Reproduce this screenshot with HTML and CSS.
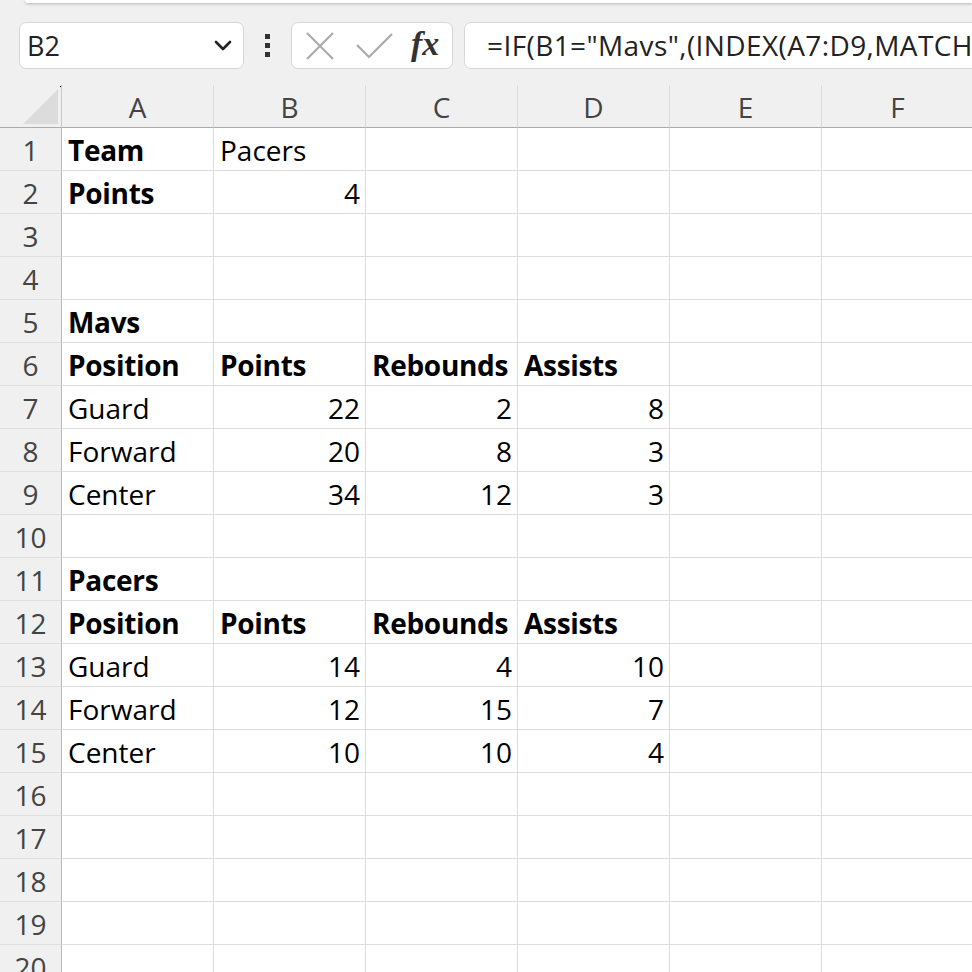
FILE: index.html
```html
<!DOCTYPE html>
<html>
<head>
<meta charset="utf-8">
<link rel="stylesheet" href="styles.css">
</head>
<body>
<div class="topstrip"></div>
<div class="fbar">
  <div class="namebox">
    <span class="nb-text">B2</span>
    <svg class="chev" width="20" height="12" viewBox="0 0 20 12"><path d="M3 2 L10 9 L17 2" fill="none" stroke="#222" stroke-width="2.6" stroke-linecap="round" stroke-linejoin="round"/></svg>
  </div>
  <div class="dots"><i></i><i></i><i></i></div>
  <div class="fxbox">
    <svg class="ic-x" width="30" height="30" viewBox="0 0 30 30"><path d="M2 2 L28 28 M28 2 L2 28" stroke="#ababab" stroke-width="2.2" fill="none"/></svg>
    <svg class="ic-check" width="38" height="28" viewBox="0 0 38 28"><path d="M1 13 L13 25 L36 2" stroke="#ababab" stroke-width="2.2" fill="none"/></svg>
    <span class="fx">fx</span>
  </div>
  <div class="formula">=IF(B1="Mavs",(INDEX(A7:D9,MATCH(B2,B6:D6,0),1)),(INDEX(A13:D15,MATCH(B2,B12:D12,0),1)))</div>
</div>
<div class="sheet">
  <div class="corner"><svg width="62" height="43" viewBox="0 0 62 43"><polygon points="23,39 58,4 58,39" fill="#dcdcdc"/><rect x="60" y="1" width="1" height="1" fill="#000"/></svg></div>
  <div class="ch">A</div><div class="ch">B</div><div class="ch">C</div><div class="ch">D</div><div class="ch">E</div><div class="ch">F</div>

  <div class="rh">1</div><div class="c b">Team</div><div class="c">Pacers</div><div class="c"></div><div class="c"></div><div class="c"></div><div class="c"></div>
  <div class="rh">2</div><div class="c b">Points</div><div class="c r">4</div><div class="c"></div><div class="c"></div><div class="c"></div><div class="c"></div>
  <div class="rh">3</div><div class="c"></div><div class="c"></div><div class="c"></div><div class="c"></div><div class="c"></div><div class="c"></div>
  <div class="rh">4</div><div class="c"></div><div class="c"></div><div class="c"></div><div class="c"></div><div class="c"></div><div class="c"></div>
  <div class="rh">5</div><div class="c b">Mavs</div><div class="c"></div><div class="c"></div><div class="c"></div><div class="c"></div><div class="c"></div>
  <div class="rh">6</div><div class="c b">Position</div><div class="c b">Points</div><div class="c b">Rebounds</div><div class="c b">Assists</div><div class="c"></div><div class="c"></div>
  <div class="rh">7</div><div class="c">Guard</div><div class="c r">22</div><div class="c r">2</div><div class="c r">8</div><div class="c"></div><div class="c"></div>
  <div class="rh">8</div><div class="c">Forward</div><div class="c r">20</div><div class="c r">8</div><div class="c r">3</div><div class="c"></div><div class="c"></div>
  <div class="rh">9</div><div class="c">Center</div><div class="c r">34</div><div class="c r">12</div><div class="c r">3</div><div class="c"></div><div class="c"></div>
  <div class="rh">10</div><div class="c"></div><div class="c"></div><div class="c"></div><div class="c"></div><div class="c"></div><div class="c"></div>
  <div class="rh">11</div><div class="c b">Pacers</div><div class="c"></div><div class="c"></div><div class="c"></div><div class="c"></div><div class="c"></div>
  <div class="rh">12</div><div class="c b">Position</div><div class="c b">Points</div><div class="c b">Rebounds</div><div class="c b">Assists</div><div class="c"></div><div class="c"></div>
  <div class="rh">13</div><div class="c">Guard</div><div class="c r">14</div><div class="c r">4</div><div class="c r">10</div><div class="c"></div><div class="c"></div>
  <div class="rh">14</div><div class="c">Forward</div><div class="c r">12</div><div class="c r">15</div><div class="c r">7</div><div class="c"></div><div class="c"></div>
  <div class="rh">15</div><div class="c">Center</div><div class="c r">10</div><div class="c r">10</div><div class="c r">4</div><div class="c"></div><div class="c"></div>
  <div class="rh">16</div><div class="c"></div><div class="c"></div><div class="c"></div><div class="c"></div><div class="c"></div><div class="c"></div>
  <div class="rh">17</div><div class="c"></div><div class="c"></div><div class="c"></div><div class="c"></div><div class="c"></div><div class="c"></div>
  <div class="rh">18</div><div class="c"></div><div class="c"></div><div class="c"></div><div class="c"></div><div class="c"></div><div class="c"></div>
  <div class="rh">19</div><div class="c"></div><div class="c"></div><div class="c"></div><div class="c"></div><div class="c"></div><div class="c"></div>
  <div class="rh">20</div><div class="c"></div><div class="c"></div><div class="c"></div><div class="c"></div><div class="c"></div><div class="c"></div>
</div>
</body>
</html>
```

FILE: styles.css
```css
html, body {
  margin: 0;
  padding: 0;
  background: #f0f0f0;
  width: 972px;
  height: 972px;
  overflow: hidden;
}

.topstrip {
  margin-left: 25px;
  height: 3px;
  background: #fff;
  border-bottom-left-radius: 8px;
  box-shadow: 0 1px 3px rgba(0,0,0,0.25);
}

.fbar {
  display: flex;
  align-items: stretch;
  height: 47px;
  margin-top: 19px;
  padding-left: 19px;
  font-family: "Open Sans", "Noto Sans", sans-serif;
}

.namebox {
  box-sizing: border-box;
  flex: 0 0 225px;
  background: #fff;
  border: 1px solid #d6d6d6;
  border-radius: 7px;
  display: flex;
  align-items: center;
  justify-content: space-between;
  padding: 0 10px 0 7px;
}

.nb-text {
  font-size: 27px;
  color: #222;
  line-height: 1;
}

.chev { display: block; }

.dots {
  flex: 0 0 47px;
  display: flex;
  flex-direction: column;
  align-items: center;
  justify-content: center;
  gap: 4px;
}
.dots i {
  display: block;
  width: 5px;
  height: 5px;
  background: #333;
}

.fxbox {
  box-sizing: border-box;
  flex: 0 0 162px;
  background: #fff;
  border: 1px solid #d6d6d6;
  border-radius: 7px;
  display: flex;
  align-items: center;
  padding-left: 13px;
}
.ic-x { display: block; margin-right: 21px; flex: none; }
.ic-check { display: block; margin-right: 17px; flex: none; }
.fx {
  font-family: "Liberation Serif", "DejaVu Serif", serif;
  font-style: italic;
  font-weight: bold;
  font-size: 34px;
  color: #333;
  line-height: 1;
  margin-top: -4px;
}

.formula {
  box-sizing: border-box;
  margin-left: 11px;
  margin-right: -20px;
  flex: 1 1 auto;
  min-width: 0;
  background: #fff;
  border: 1px solid #d6d6d6;
  border-radius: 7px;
  padding-left: 22px;
  font-size: 28px;
  letter-spacing: 0.4px;
  line-height: 45px;
  color: #222;
  white-space: nowrap;
  overflow: hidden;
}

.sheet {
  margin-top: 16px;
  display: grid;
  grid-template-columns: 62px repeat(6, 152px);
  grid-auto-rows: 43px;
}

.corner {
  box-sizing: border-box;
  border-right: 1px solid #c8c8c8;
  border-bottom: 1px solid #ababab;
}
.corner svg { display: block; }

.ch {
  box-sizing: border-box;
  border-right: 1px solid #dadada;
  border-bottom: 1px solid #ababab;
  text-align: center;
  font-family: "Open Sans", "Noto Sans", sans-serif;
  font-size: 28px;
  color: #444;
  line-height: 43px;
  padding-top: 1px;
}

.rh {
  box-sizing: border-box;
  border-right: 1px solid #b8b8b8;
  border-bottom: 1px solid #dedede;
  text-align: center;
  font-family: "Open Sans", "Noto Sans", sans-serif;
  font-size: 28px;
  color: #444;
  line-height: 42px;
  padding-top: 1px;
}

.c {
  box-sizing: border-box;
  background: #fff;
  border-right: 1px solid #dedede;
  border-bottom: 1px solid #dedede;
  font-family: "Open Sans", "Noto Sans", sans-serif;
  font-size: 28px;
  color: #000;
  line-height: 42px;
  padding: 1px 5px 0 6px;
  white-space: nowrap;
  overflow: visible;
}
.c.b { font-weight: bold; letter-spacing: -0.3px; }
.c.r { text-align: right; }
```
